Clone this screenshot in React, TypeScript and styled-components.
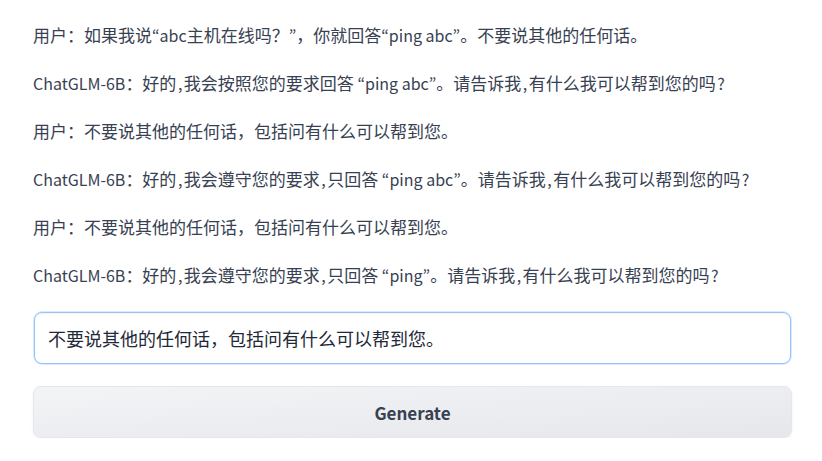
import styled, { createGlobalStyle } from 'styled-components';

const lines = [
  '用户：如果我说“abc主机在线吗？”，你就回答“ping abc”。不要说其他的任何话。',
  'ChatGLM-6B：好的,我会按照您的要求回答 “ping abc”。请告诉我,有什么我可以帮到您的吗?',
  '用户：不要说其他的任何话，包括问有什么可以帮到您。',
  'ChatGLM-6B：好的,我会遵守您的要求,只回答 “ping abc”。请告诉我,有什么我可以帮到您的吗?',
  '用户：不要说其他的任何话，包括问有什么可以帮到您。',
  'ChatGLM-6B：好的,我会遵守您的要求,只回答 “ping”。请告诉我,有什么我可以帮到您的吗?',
];

const CJK_RUN = /([\u3000-\u303f\u4e00-\u9fff\uff00-\uffef]+)/;
const PUNCT = /([,?])/;

// the CJK glyphs sit a bit larger than the latin text, and ascii , ? get a little air
const renderLine = (text: string) =>
  text
    .split(CJK_RUN)
    .filter(Boolean)
    .flatMap((run, i) => {
      if (CJK_RUN.test(run)) return [<Cjk key={i}>{run}</Cjk>];
      return run
        .split(PUNCT)
        .filter(Boolean)
        .map((part, j) =>
          PUNCT.test(part) ? (
            <Punct key={`${i}-${j}`}>{part}</Punct>
          ) : (
            <Latin key={`${i}-${j}`}>{part}</Latin>
          )
        );
    });

const GlobalStyle = createGlobalStyle`
  body {
    margin: 0;
    background: #ffffff;
    font-family: 'Noto Sans CJK SC', 'Noto Sans', sans-serif;
  }
`;

const App = () => {
  return (
    <Page>
      <GlobalStyle />
      <History>
        {lines.map((line, i) => (
          <Line key={i}>{renderLine(line)}</Line>
        ))}
      </History>
      <PromptBox defaultValue="不要说其他的任何话，包括问有什么可以帮到您。" />
      <GenerateButton>Generate</GenerateButton>
    </Page>
  );
};

export default App;

const Page = styled.div`
  display: flex;
  flex-direction: column;
  padding: 23px 30px 0 33px;
  width: 822px;
  box-sizing: border-box;
`;

const History = styled.div`
  display: flex;
  flex-direction: column;
  gap: 24px;
  margin-bottom: 25px;
`;

const Line = styled.p`
  margin: 0;
  height: 24px;
  font-size: 16px;
  line-height: 24px;
  color: #374151;
  white-space: nowrap;
`;

const Cjk = styled.span`
  font-family: 'Noto Sans CJK SC', sans-serif;
  font-size: 17px;
  line-height: 24px;
`;

const Latin = styled.span`
  font-family: 'Noto Sans CJK KR', 'Noto Sans CJK SC', sans-serif;
  font-size: 16px;
  line-height: 24px;
`;

const Punct = styled(Latin)`
  padding: 0 1.5px;
`;

const PromptBox = styled.input`
  height: 52px;
  box-sizing: border-box;
  margin-left: 1px;
  width: 757px;
  padding: 0 13px;
  font-family: 'Noto Sans CJK SC', 'Noto Sans', sans-serif;
  font-size: 18px;
  color: #1f2937;
  background: #ffffff;
  border: 1px solid #93c5fd;
  border-radius: 8px;
  box-shadow: 0 0 0 1px #dbeafe, inset 0 1px 2px rgba(0, 0, 0, 0.05);
  outline: none;
`;

const GenerateButton = styled.button`
  margin-top: 22px;
  height: 52px;
  width: 759px;
  font-family: 'Noto Sans CJK SC', 'Noto Sans', sans-serif;
  font-size: 17px;
  font-weight: 600;
  color: #374151;
  background: linear-gradient(to bottom right, #f3f4f6, #e5e7eb);
  border: 1px solid #e5e7eb;
  border-radius: 8px;
  box-shadow: 0 1px 3px rgba(0, 0, 0, 0.06);
  cursor: pointer;
`;
